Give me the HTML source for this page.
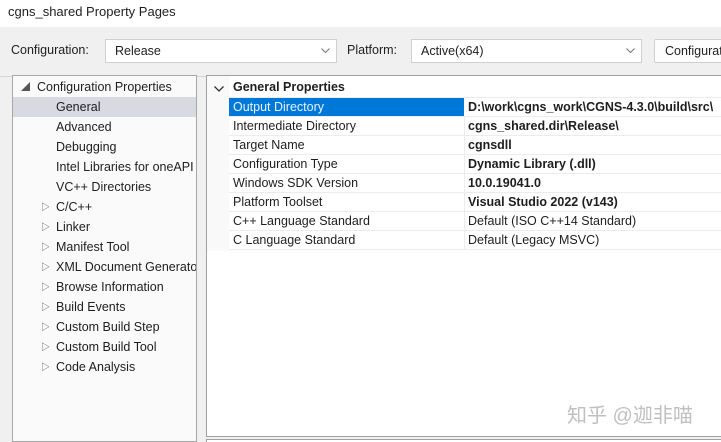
<!DOCTYPE html>
<html><head><meta charset="utf-8"><style>
*{margin:0;padding:0;box-sizing:border-box}
body{width:721px;height:442px;overflow:hidden;background:#f0f0f0;font-family:"Segoe UI","Liberation Sans","Noto Sans CJK SC",sans-serif;font-size:12.5px;color:#1e1e1e;position:relative}
.a{position:absolute;white-space:nowrap}
.combo{position:absolute;background:#fff;border:1px solid #d0d0d0;height:24px;top:39px;padding:4px 0 0 9px}
.chev{position:absolute;right:6px;top:8px}
.tree{position:absolute;left:12px;top:75px;width:185px;height:367px;background:#fafafa;border:1px solid #a8a8a8;overflow:hidden}
.tr{position:absolute;height:20px;line-height:20px;left:0;width:183px}
.tri{position:absolute;font-size:9px;color:#555}
.grid{position:absolute;left:206px;top:75px;width:515px;height:362px;background:#fff;border:1px solid #a0a0a0;border-right:none;overflow:hidden}
.row{position:absolute;left:22px;width:495px;height:19px;line-height:18px;border-bottom:1px solid #ececec}
.row .k{position:absolute;left:4px}
.row .v{position:absolute;left:239px;}
.row .sep{position:absolute;left:235px;top:0;height:19px;border-left:1px solid #ececec}
b{font-weight:bold}
</style></head><body>
<div class="a" style="left:0;top:0;width:721px;height:27px;background:#fff"></div>
<div class="a" style="left:8px;top:4px;font-size:13px">cgns_shared Property Pages</div>
<div class="a" style="left:11px;top:43px">Configuration:</div>
<div class="combo" style="left:105px;width:232px">Release<svg class="chev" width="9" height="6" viewBox="0 0 9 6"><path d="M0.5 0.5L4.5 4.5L8.5 0.5" fill="none" stroke="#777" stroke-width="1"/></svg></div>
<div class="a" style="left:347px;top:43px">Platform:</div>
<div class="combo" style="left:411px;width:231px">Active(x64)<svg class="chev" width="9" height="6" viewBox="0 0 9 6"><path d="M0.5 0.5L4.5 4.5L8.5 0.5" fill="none" stroke="#777" stroke-width="1"/></svg></div>
<div class="a" style="left:654px;top:39px;width:70px;height:24px;background:#fdfdfd;border:1px solid #cfcfcf;border-radius:2px;padding:4px 0 0 10px;overflow:hidden">Configuration</div>
<div class="a" style="left:0;top:76px;width:721px;height:1px;background:#d5d5d5"></div>

<div class="tree">
<div class="tr" style="top:1px"><span class="tri" style="left:8px;top:0">&#9698;</span><span class="a" style="left:24px">Configuration Properties</span></div>
<div class="tr" style="top:21px;background:#d9d9e1"><span class="a" style="left:43px">General</span></div>
<div class="tr" style="top:41px"><span class="a" style="left:43px">Advanced</span></div>
<div class="tr" style="top:61px"><span class="a" style="left:43px">Debugging</span></div>
<div class="tr" style="top:81px"><span class="a" style="left:43px">Intel Libraries for oneAPI</span></div>
<div class="tr" style="top:101px"><span class="a" style="left:43px">VC++ Directories</span></div>
<div class="tr" style="top:121px"><span class="tri" style="left:28px">&#9655;</span><span class="a" style="left:43px">C/C++</span></div>
<div class="tr" style="top:141px"><span class="tri" style="left:28px">&#9655;</span><span class="a" style="left:43px">Linker</span></div>
<div class="tr" style="top:161px"><span class="tri" style="left:28px">&#9655;</span><span class="a" style="left:43px">Manifest Tool</span></div>
<div class="tr" style="top:181px"><span class="tri" style="left:28px">&#9655;</span><span class="a" style="left:43px">XML Document Generator</span></div>
<div class="tr" style="top:201px"><span class="tri" style="left:28px">&#9655;</span><span class="a" style="left:43px">Browse Information</span></div>
<div class="tr" style="top:221px"><span class="tri" style="left:28px">&#9655;</span><span class="a" style="left:43px">Build Events</span></div>
<div class="tr" style="top:241px"><span class="tri" style="left:28px">&#9655;</span><span class="a" style="left:43px">Custom Build Step</span></div>
<div class="tr" style="top:261px"><span class="tri" style="left:28px">&#9655;</span><span class="a" style="left:43px">Custom Build Tool</span></div>
<div class="tr" style="top:281px"><span class="tri" style="left:28px">&#9655;</span><span class="a" style="left:43px">Code Analysis</span></div>
</div>

<div class="grid">
<div class="a" style="left:0;top:0;width:22px;height:175px;background:#f9f9f9"></div>
<div class="a" style="left:22px;top:3px;width:495px;height:19px;border-bottom:1px solid #ececec"></div>
<svg class="a" style="left:7px;top:10px" width="10" height="6" viewBox="0 0 10 6"><path d="M0.5 0.5L5 5L9.5 0.5" fill="none" stroke="#333" stroke-width="1.3"/></svg>
<div class="a" style="left:26px;top:4px"><b>General Properties</b></div>
<div class="row" style="top:22px"><span class="a" style="left:0;top:0;width:235px;height:18px;background:#0078d7"></span><span class="k" style="color:#e8f2ff">Output Directory</span><span class="v"><b>D:\work\cgns_work\CGNS-4.3.0\build\src\</b></span></div>
<div class="row" style="top:41px"><span class="sep"></span><span class="k">Intermediate Directory</span><span class="v"><b>cgns_shared.dir\Release\</b></span></div>
<div class="row" style="top:60px"><span class="sep"></span><span class="k">Target Name</span><span class="v"><b>cgnsdll</b></span></div>
<div class="row" style="top:79px"><span class="sep"></span><span class="k">Configuration Type</span><span class="v"><b>Dynamic Library (.dll)</b></span></div>
<div class="row" style="top:98px"><span class="sep"></span><span class="k">Windows SDK Version</span><span class="v"><b>10.0.19041.0</b></span></div>
<div class="row" style="top:117px"><span class="sep"></span><span class="k">Platform Toolset</span><span class="v"><b>Visual Studio 2022 (v143)</b></span></div>
<div class="row" style="top:136px"><span class="sep"></span><span class="k">C++ Language Standard</span><span class="v">Default (ISO C++14 Standard)</span></div>
<div class="row" style="top:155px"><span class="sep"></span><span class="k">C Language Standard</span><span class="v">Default (Legacy MSVC)</span></div>
<div class="a" style="left:360px;top:323px;font-size:20px;color:#c0c0c0">知乎 @迦非喵</div>
</div>
<div class="a" style="left:206px;top:439px;width:515px;height:3px;background:#fff;border:1px solid #a0a0a0;border-bottom:none;border-right:none"></div>
</body></html>
